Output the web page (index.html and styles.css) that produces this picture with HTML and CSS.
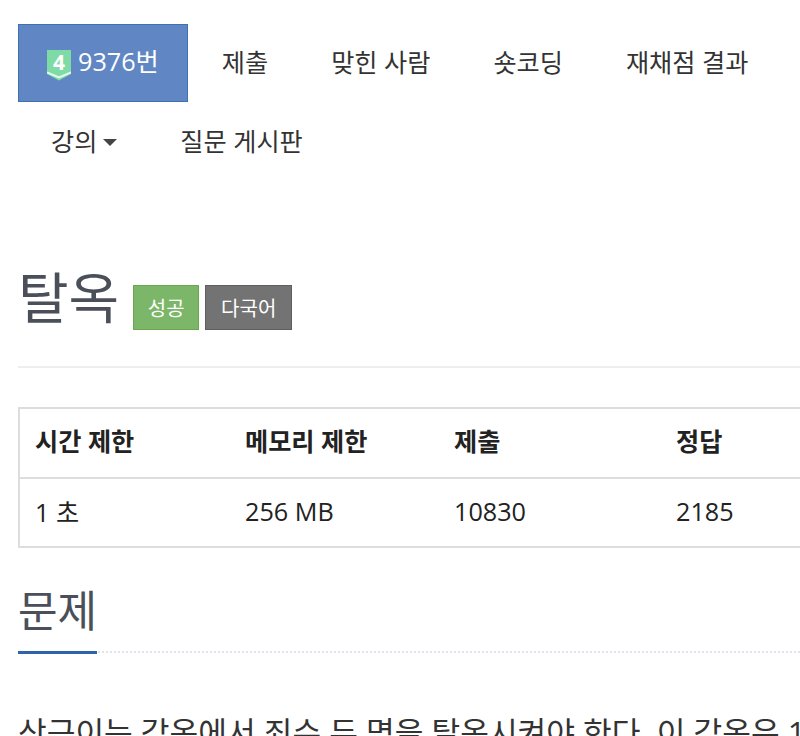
FILE: index.html
```html
<!DOCTYPE html>
<html lang="ko">
<head>
  <meta charset="UTF-8">
  <title>9376번: 탈옥</title>
  <link rel="stylesheet" href="styles.css">
</head>
<body>
  <div class="container">
    <ul class="tabs">
      <li class="tab active">
        <svg class="tier" width="24" height="34" viewBox="0 -3 24 34">
          <path d="M0 0H24V24L12 30.500 0 24Z" fill="#7fdba6"/>
          <path d="M0 22.500L12 27.500 24 22.500" fill="none" stroke="#e4f8ec" stroke-width="2"/>
          <text x="12" y="19.500" class="tier-num">4</text>
        </svg>
        <span>9376번</span>
      </li>
      <li class="tab">제출</li>
      <li class="tab">맞힌 사람</li>
      <li class="tab">숏코딩</li>
      <li class="tab">재채점 결과</li>
      <li class="tab">강의<span class="caret"></span></li>
      <li class="tab">질문 게시판</li>
    </ul>

    <div class="page-header">
      <h1>탈옥</h1>
      <span class="label success">성공</span>
      <span class="label gray">다국어</span>
    </div>

    <table class="info">
      <thead>
        <tr>
          <th class="col-time">시간 제한</th>
          <th class="col-mem">메모리 제한</th>
          <th class="col-submit">제출</th>
          <th>정답</th>
        </tr>
      </thead>
      <tbody>
        <tr>
          <td>1 초</td>
          <td>256 MB</td>
          <td>10830</td>
          <td>2185</td>
        </tr>
      </tbody>
    </table>

    <div class="headline">
      <h2>문제</h2>
    </div>

    <p class="problem">상근이는 감옥에서 죄수 두 명을 탈옥시켜야 한다. 이 감옥은 1층짜리 건물이고, 상근이는 방금 평면도를 얻었다.</p>
  </div>
</body>
</html>
```

FILE: styles.css
```css
* {
  margin: 0;
  padding: 0;
  box-sizing: border-box;
}

html, body {
  height: 736px;
  overflow: hidden;
}

body {
  background-color: #fff;
  color: #333;
  font-family: "Open Sans", "Noto Sans CJK KR", sans-serif;
}

.container {
  width: 1000px;
  padding: 24px 0 0 18px;
}

.tabs {
  display: flex;
  flex-wrap: wrap;
  width: 782px;
  list-style: none;
}

.tab {
  display: flex;
  align-items: center;
  height: 79px;
  margin: 0 2px 0 5px;
  padding: 0 27px 6px;
  border: 1px solid transparent;
  font-size: 25.200px;
}

.tab.active {
  align-self: flex-start;
  height: 78px;
  margin: 0 1px 0 0;
  padding: 0 28px 6px;
  color: #fff;
  background-color: #6087c4;
  border-color: #3f6fb5;
}

.tier {
  margin: 8px 7px 0 0;
}

.tier-num {
  fill: #fff;
  font-size: 21px;
  font-weight: 700;
  text-anchor: middle;
}

.caret {
  width: 0;
  height: 0;
  margin: 5px 0 0 6px;
  border-top: 7px solid #444;
  border-left: 7.500px solid transparent;
  border-right: 7.500px solid transparent;
}

.page-header {
  display: flex;
  align-items: flex-end;
  height: 186px;
  padding-bottom: 36px;
  border-bottom: 2px solid #eee;
}

h1 {
  margin: 0 14px 6px 0;
  color: #4a4f5a;
  font-size: 55px;
  font-weight: 400;
  line-height: 1;
}

.label {
  display: flex;
  align-items: center;
  justify-content: center;
  height: 45px;
  margin-right: 6px;
  border: 1px solid;
  color: #fff;
  font-size: 20px;
}

.label.success {
  width: 66px;
  background-color: #7cb668;
  border-color: #6aa84f;
}

.label.gray {
  width: 87px;
  background-color: #737373;
  border-color: #5f5f5f;
}

.info {
  table-layout: fixed;
  width: 860px;
  margin-top: 39px;
  border-collapse: collapse;
  border: 2px solid #ddd;
  color: #222;
  font-size: 25.200px;
  text-align: left;
}

.info th, .info td {
  height: 70px;
  padding: 0 17px 6px;
  border-bottom: 2px solid #ddd;
}

.info td {
  height: 69px;
  padding-bottom: 4px;
  font-weight: 400;
}

.info th:first-child, .info td:first-child {
  padding-left: 15px;
}

.info th {
  font-weight: 700;
}

.col-time, .col-mem {
  width: 209px;
}

.col-submit {
  width: 222px;
}

.headline {
  width: 782px;
  height: 105px;
  border-bottom: 2px dotted #dfe3ee;
}

.headline h2 {
  display: inline-flex;
  align-items: flex-end;
  height: 106px;
  padding-bottom: 19px;
  border-bottom: 3px solid #2f64ac;
  color: #4a4f5a;
  font-size: 43px;
  font-weight: 400;
  line-height: 1;
}

.problem {
  margin-top: 55px;
  color: #333;
  font-size: 31.200px;
  white-space: nowrap;
}
```
